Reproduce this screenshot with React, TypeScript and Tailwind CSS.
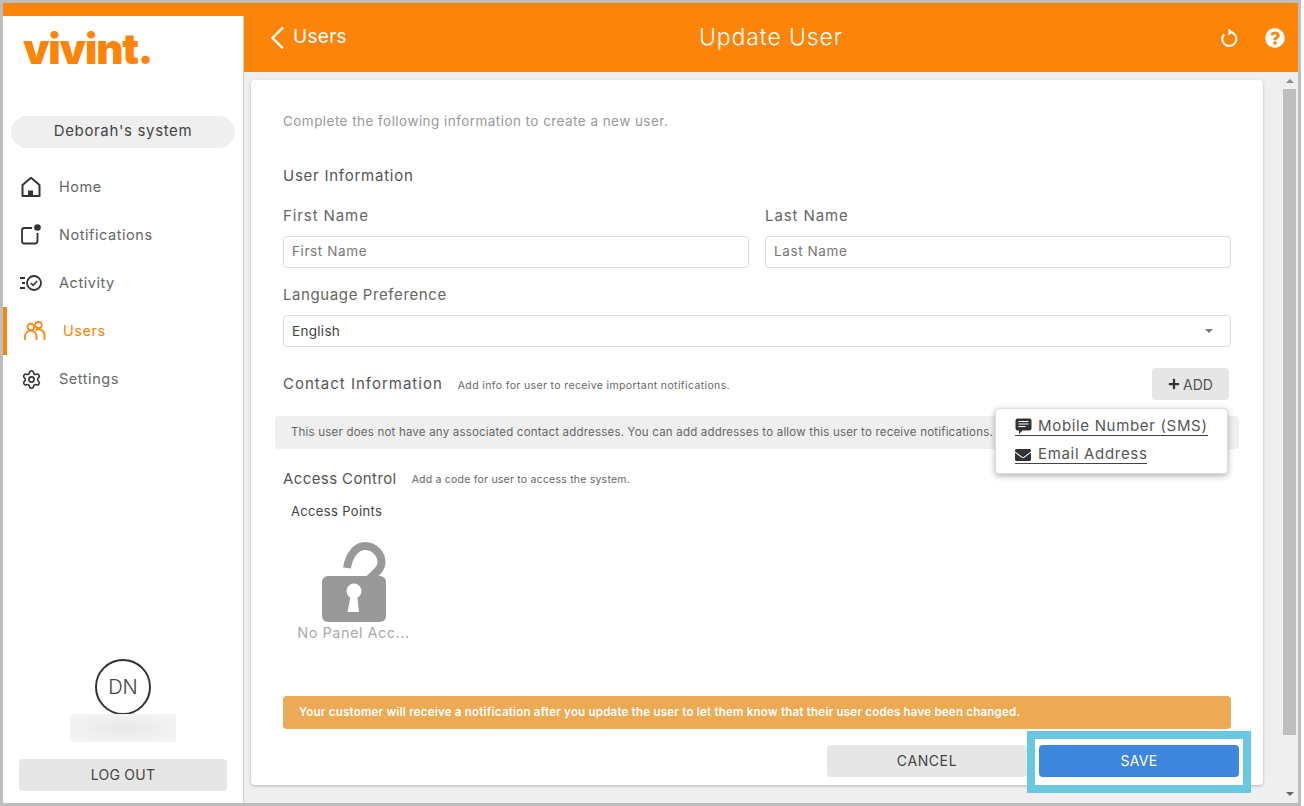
import { Settings } from "lucide-react";
import { FaEnvelope, FaPlus, FaQuestionCircle } from "react-icons/fa";

const font = { fontFamily: "Inter, 'Noto Sans', sans-serif" };

function HomeIcon() {
  return (
    <svg width="20" height="22" viewBox="0 0 20 22" fill="none" stroke="#333" strokeWidth="2">
      <path d="M1.500 20V9L10 1.800 18.500 9V20Z" strokeLinejoin="round" />
      <path d="M7 20v-5.500h5V20" fill="#333" stroke="none" />
    </svg>
  );
}

function BellIcon() {
  return (
    <svg width="22" height="22" viewBox="0 0 22 22" fill="none">
      <path d="M12 4H4.500A2.500 2.500 0 0 0 2 6.500V17a2.500 2.500 0 0 0 2.500 2.500H15A2.500 2.500 0 0 0 17.500 17V9" stroke="#333" strokeWidth="1.800" />
      <circle cx="17.500" cy="3.500" r="3.300" fill="#333" />
    </svg>
  );
}

function ActivityIcon() {
  return (
    <svg width="24" height="18" viewBox="0 0 24 18" fill="none" stroke="#333">
      <path d="M1 4h5M3 9h3M1 14h5" strokeWidth="1.800" />
      <circle cx="15" cy="9" r="7" strokeWidth="1.800" />
      <path d="M11.800 9l2.300 2.300 4-4.300" strokeWidth="1.500" />
    </svg>
  );
}

function UsersIcon() {
  return (
    <svg width="22" height="20" viewBox="0 0 22 20" fill="none" stroke="#fb8409" strokeWidth="1.700">
      <circle cx="6.800" cy="6" r="3.300" />
      <circle cx="14.500" cy="4" r="3.200" />
      <path d="M1 19v-3.500a5.800 5.800 0 0 1 11.600 0V19" />
      <path d="M11.500 9.300a5.800 5.800 0 0 1 9 4.700v5" />
    </svg>
  );
}

function RefreshIcon() {
  return (
    <svg width="18" height="20" viewBox="0 0 18 20" fill="none">
      <path d="M10.500 4.100A7 7 0 1 1 4.200 6.200" stroke="white" strokeWidth="2" />
      <path d="M8.500 0.500l4.500 3.600-4.500 3.400z" fill="white" />
    </svg>
  );
}

function BackIcon() {
  return (
    <svg width="15" height="24" viewBox="0 0 15 24" fill="none">
      <path d="M13 1.500L2.500 12 13 22.500" stroke="white" strokeWidth="2.400" />
    </svg>
  );
}

function SmsIcon() {
  return (
    <svg width="17" height="17" viewBox="0 0 17 17">
      <path d="M2.500 0.500h12a2 2 0 0 1 2 2v8a2 2 0 0 1-2 2H7.500L4 16v-3.500H2.500a2 2 0 0 1-2-2v-8a2 2 0 0 1 2-2z" fill="#333" />
      <path d="M3.500 3.500h10M3.500 6h10M3.500 8.500h7" stroke="white" strokeWidth="1.200" />
    </svg>
  );
}

function OpenLockIcon() {
  return (
    <svg width="66" height="82" viewBox="0 0 66 82" fill="none">
      <path d="M26 26C28 12 36 4 44 4a16.500 16.500 0 0 1 16.500 16.500C60.500 28 52 33 47 38" stroke="#999" strokeWidth="8" fill="none" />
      <rect x="1" y="34" width="64" height="46" rx="6" fill="#999" />
      <circle cx="33" cy="49" r="7.500" fill="white" />
      <path d="M30 52h6l2 18H26.500z" fill="white" />
    </svg>
  );
}

const navItems = [
  { label: "Home", icon: <HomeIcon /> },
  { label: "Notifications", icon: <BellIcon /> },
  { label: "Activity", icon: <ActivityIcon /> },
  { label: "Users", icon: <UsersIcon />, active: true },
  { label: "Settings", icon: <Settings size={21} color="#333" strokeWidth={1.8} /> },
];

function Field({ label, placeholder }: { label: string; placeholder: string }) {
  return (
    <div className="flex-1">
      <div className="text-[15px] leading-5 text-[#666] tracking-[0.9px]">{label}</div>
      <div className="mt-[10px] h-[32px] border border-[#ddd] rounded flex items-center pl-2 pb-[1px] text-[13.500px] text-[#777] tracking-[0.6px]">{placeholder}</div>
    </div>
  );
}

export default function App() {
  return (
    <div style={font} className="w-[1304px] h-[806px] overflow-hidden bg-white pr-[3px]">
      <div className="h-full border-[3px] border-[#bdbdbd] flex flex-col">
        <div className="flex flex-1 min-h-0 bg-[#fb8409]">
          <aside className="w-[241px] mt-[13px] bg-white border-r border-[#ccc] flex flex-col">
            <div className="h-[71px] pl-[20px] pt-[8px] text-[#fb8409] text-[42px] leading-[50px] font-black tracking-[-1.2px]">vivint.</div>
            <div className="mx-[8px] mt-[29px] h-[32px] rounded-full bg-[#efefef] flex items-center justify-center pb-[1px] text-[15px] text-[#444] tracking-[0.65px]">Deborah's system</div>
            <nav className="mt-[15px]">
              {navItems.map((item) => (
                <div key={item.label} className={`h-[48px] flex items-center ${item.active ? "border-l-4 border-[#fb8409] text-[#fb8409]" : "text-[#666]"}`}>
                  <span className="flex justify-center w-[28px] mx-[14px]">{item.icon}</span>
                  <span className="text-[14.500px] tracking-[0.55px]">{item.label}</span>
                </div>
              ))}
            </nav>
            <div className="mt-auto flex flex-col items-center">
              <div className="w-[56px] h-[56px] -mb-[1px] rounded-full border-2 border-[#333] flex items-center justify-center text-[20px] font-light text-[#444]">DN</div>
              <div className="w-[106px] h-[28px] bg-[radial-gradient(ellipse_at_center,#e8e8e8,#f6f6f6)]"></div>
              <button className="mt-[17px] mb-[12px] w-[208px] h-[32px] pb-[2px] rounded bg-[#e6e6e6] text-[14px] text-[#444] tracking-[0.25px]">LOG OUT</button>
            </div>
          </aside>
          <main className="flex-1 min-w-0 flex flex-col">
            <header className="h-[69px] relative flex items-center justify-between text-white shrink-0">
              <div className="flex items-center pl-[26px] gap-[8px] text-[19px] tracking-[0.3px]">
                <BackIcon />
                <span>Users</span>
              </div>
              <div className="absolute left-0 right-0 text-center text-[23px] font-light tracking-[0.9px]">Update User</div>
              <div className="flex items-center gap-[27px] pr-[13px]">
                <RefreshIcon />
                <FaQuestionCircle size={20} />
              </div>
            </header>
            <div className="flex-1 min-h-0 bg-[#efefef] flex pl-[7px] pt-[8px] pb-[18px]">
              <section className="relative w-[1012px] bg-white rounded shadow-[0_1px_3px_rgba(0,0,0,0.25)] px-[32px] flex flex-col">
                <p className="mt-[32px] text-[13.500px] leading-[18px] text-[#999] tracking-[0.45px]">Complete the following information to create a new user.</p>
                <h2 className="mt-[36px] text-[15px] leading-5 text-[#555] tracking-[0.75px]">User Information</h2>
                <div className="mt-[20px] flex gap-[16px]">
                  <Field label="First Name" placeholder="First Name" />
                  <Field label="Last Name" placeholder="Last Name" />
                </div>
                <div className="mt-[17px] text-[15px] leading-5 text-[#666] tracking-[0.6px]">Language Preference</div>
                <div className="mt-[10px] h-[32px] border border-[#ddd] rounded flex items-center justify-between px-2 text-[13.500px] text-[#444] tracking-[0.3px]">
                  <span>English</span>
                  <span className="mr-[9px] w-0 h-0 border-x-[4px] border-x-transparent border-t-[4px] border-t-[#777]"></span>
                </div>
                <div className="mt-[21px] h-[32px] flex items-center">
                  <span className="text-[15px] text-[#555] tracking-[1px]">Contact Information</span>
                  <span className="ml-[15px] mt-[3px] text-[10.500px] text-[#666] tracking-[0.37px]">Add info for user to receive important notifications.</span>
                  <button className="ml-auto mr-[2px] w-[77px] h-[32px] rounded bg-[#e6e6e6] flex items-center justify-center gap-[3px] text-[14px] text-[#555]">
                    <FaPlus size={12} color="#333" />
                    ADD
                  </button>
                </div>
                <div className="-mx-[8px] mt-[16px] h-[33px] rounded bg-[#efefef] flex items-center pl-[16px] text-[11.500px] text-[#666] tracking-[0.2px] overflow-hidden whitespace-nowrap">
                  This user does not have any associated contact addresses. You can add addresses to allow this user to receive notifications.
                </div>
                <div className="absolute left-[744px] top-[328px] w-[233px] h-[66px] bg-white rounded border border-[#ddd] shadow-[0_2px_6px_rgba(0,0,0,0.3)] pl-[19px] pt-[1px] text-[15px] text-[#555] tracking-[0.67px]">
                  <a className="h-[26px] mb-[4px] w-fit flex items-end gap-[6px] border-b border-[#444] leading-[18px]"><SmsIcon /><span>Mobile Number (SMS)</span></a>
                  <a className="h-[24px] w-fit flex items-end gap-[7px] border-b border-[#444] leading-[18px]"><FaEnvelope size={16} color="#333" /><span>Email Address</span></a>
                </div>
                <div className="mt-[20px] flex items-center h-[20px]">
                  <span className="text-[15px] text-[#555] tracking-[0.4px]">Access Control</span>
                  <span className="ml-[15px] mt-[2px] text-[10.500px] text-[#666] tracking-[0.22px]">Add a code for user to access the system.</span>
                </div>
                <div className="mt-[14px] ml-[8px] text-[13px] leading-4 text-[#444] tracking-[0.35px]">Access Points</div>
                <div className="ml-[8px] mt-[23px] w-[125px] flex flex-col items-center">
                  <OpenLockIcon />
                  <span className="-mt-[1px] text-[14.500px] leading-5 text-[#aaa] tracking-[0.5px]">No Panel Acc...</span>
                </div>
                <div className="mt-[53px] h-[33px] rounded bg-[#edaa55] flex items-center pl-[16px] text-[11.500px] font-semibold text-white tracking-[0.23px]">
                  Your customer will receive a notification after you update the user to let them know that their user codes have been changed.
                </div>
                <div className="mt-[16px] flex justify-end">
                  <button className="w-[200px] h-[32px] pb-[2px] rounded bg-[#e6e6e6] text-[14px] text-[#444] tracking-[0.6px]">CANCEL</button>
                  <div className="relative ml-[12px] mr-[-8px]">
                    <button className="w-[200px] h-[32px] pb-[2px] rounded bg-[#3d85dd] text-[14px] text-white tracking-[0.3px]">SAVE</button>
                    <div className="absolute -left-[12px] -right-[12px] -top-[14px] -bottom-[16px] border-[8px] border-[#69c8e0]"></div>
                  </div>
                </div>
              </section>
              <div className="ml-[20px] w-[13px] flex flex-col items-center">
                <span className="-mt-[1px] w-0 h-0 border-x-[4px] border-x-transparent border-b-[4px] border-b-[#888]"></span>
                <div className="mt-[6px] w-[13px] h-[646px] bg-[#bebebe]"></div>
                <span className="mt-auto mb-[-11px] w-0 h-0 border-x-[4px] border-x-transparent border-t-[4px] border-t-[#666]"></span>
              </div>
            </div>
          </main>
        </div>
      </div>
    </div>
  );
}
